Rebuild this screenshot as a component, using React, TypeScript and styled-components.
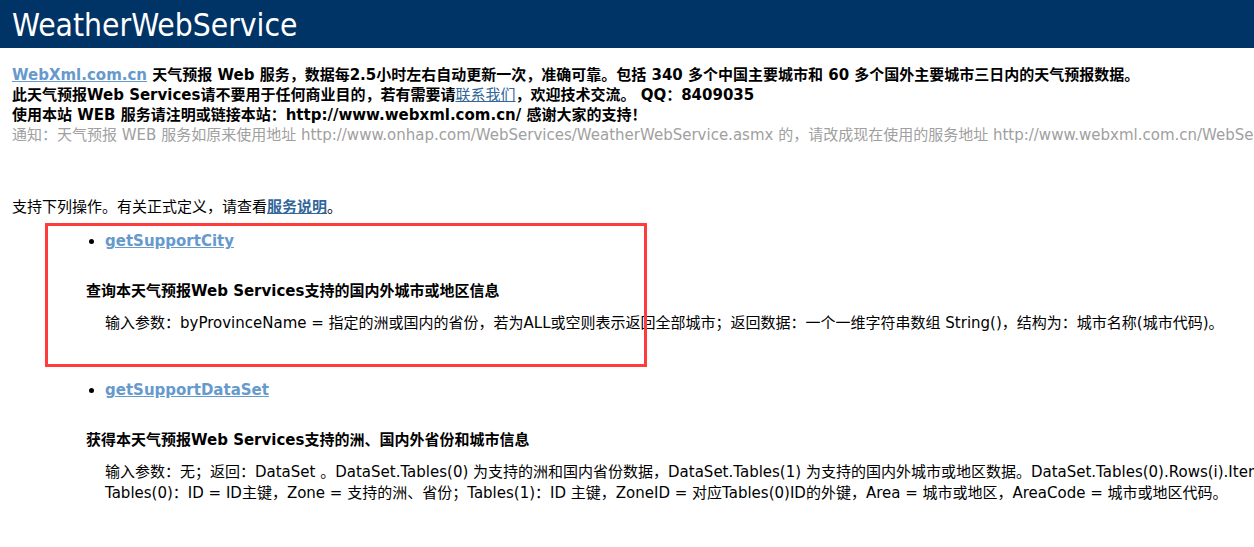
import React from 'react';
import styled, {createGlobalStyle} from 'styled-components';

const GlobalStyle = createGlobalStyle`
    html, body {
        margin: 0;
        padding: 0;
        background: #ffffff;
    }
    body {
        font-family: "DejaVu Sans", "Noto Sans CJK SC", sans-serif;
        color: #000;
        overflow: hidden;
    }
`;

const operations = [
    {
        name: 'getSupportCity',
        title: '查询本天气预报Web Services支持的国内外城市或地区信息',
        lines: [
            '输入参数：byProvinceName = 指定的洲或国内的省份，若为ALL或空则表示返回全部城市；返回数据：一个一维字符串数组 String()，结构为：城市名称(城市代码)。',
        ],
    },
    {
        name: 'getSupportDataSet',
        title: '获得本天气预报Web Services支持的洲、国内外省份和城市信息',
        lines: [
            '输入参数：无；返回：DataSet 。DataSet.Tables(0) 为支持的洲和国内省份数据，DataSet.Tables(1) 为支持的国内外城市或地区数据。DataSet.Tables(0).Rows(i).Item("ID") 主键对应 DataSet.Tables(1).Rows(i).Item("ZoneID") 外键。',
            'Tables(0)：ID = ID主键，Zone = 支持的洲、省份；Tables(1)：ID 主键，ZoneID = 对应Tables(0)ID的外键，Area = 城市或地区，AreaCode = 城市或地区代码。',
        ],
    },
];

const App = () => {
    return (
        <Page>
            <GlobalStyle />
            <Heading>WeatherWebService</Heading>
            <Intro>
                <Line bold>
                    <Link light href="#">WebXml.com.cn</Link> 天气预报 Web 服务，数据每2.5小时左右自动更新一次，准确可靠。包括 340 多个中国主要城市和 60 多个国外主要城市三日内的天气预报数据。
                </Line>
                <Line bold>
                    此天气预报Web Services请不要用于任何商业目的，若有需要请<Link href="#" plain>联系我们</Link>，欢迎技术交流。 QQ：8409035
                </Line>
                <Line bold>使用本站 WEB 服务请注明或链接本站：http://www.webxml.com.cn/ 感谢大家的支持！</Line>
                <Line muted>
                    通知：天气预报 WEB 服务如原来使用地址 http://www.onhap.com/WebServices/WeatherWebService.asmx 的，请改成现在使用的服务地址 http://www.webxml.com.cn/WebServices/WeatherWebService.asmx
                </Line>
            </Intro>
            <Lead>
                支持下列操作。有关正式定义，请查看<Link href="#">服务说明</Link>。
            </Lead>
            <OpList>
                {operations.map(op => (
                    <OpItem key={op.name}>
                        <Link light href="#">{op.name}</Link>
                        <OpTitle>{op.title}</OpTitle>
                        <OpDesc>
                            {op.lines.map((l, i) => (
                                <DescLine key={i}>{l}</DescLine>
                            ))}
                        </OpDesc>
                    </OpItem>
                ))}
            </OpList>
            <Highlight />
        </Page>
    );
};

const Page = styled.div`
    position: relative;
    width: 1254px;
    min-height: 547px;
    font-size: 15px;
    overflow: hidden;
`;

const Heading = styled.h1`
    margin: 0;
    height: 48px;
    box-sizing: border-box;
    padding: 6px 0 0 12px;
    background-color: #003366;
    color: #ffffff;
    font-family: "DejaVu Sans Condensed", "DejaVu Sans", sans-serif;
    font-weight: normal;
    font-size: 31.5px;
    line-height: 38px;
`;

const Intro = styled.div`
    margin: 17px 0 0 12px;
    line-height: 20px;
`;

const Line = styled.div<{bold?: boolean; muted?: boolean}>`
    white-space: nowrap;
    font-weight: ${p => (p.bold ? 'bold' : 'normal')};
    color: ${p => (p.muted ? '#a0a0a0' : '#000')};
`;

const Link = styled.a<{light?: boolean; plain?: boolean}>`
    color: ${p => (p.light ? '#6699cc' : '#336699')};
    font-weight: ${p => (p.plain ? 'normal' : 'bold')};
    text-decoration: underline;
`;

const Lead = styled.p`
    margin: 52px 0 0 12px;
    line-height: 20px;
`;

const OpList = styled.ul`
    margin: 14px 0 0 0;
    padding: 0 0 0 105px;
    list-style: disc;
`;

const OpItem = styled.li`
    margin-bottom: 46px;
    line-height: 20px;
`;

const OpTitle = styled.h3`
    margin: 30px 0 0 -19px;
    font-size: 15px;
    line-height: 20px;
    font-weight: bold;
`;

const OpDesc = styled.div`
    margin-top: 12px;
    line-height: 21px;
`;

const DescLine = styled.div`
    white-space: nowrap;
`;

const Highlight = styled.div`
    position: absolute;
    left: 45px;
    top: 223px;
    width: 602px;
    height: 144px;
    box-sizing: border-box;
    border: 3px solid #ff3b3b;
    pointer-events: none;
`;

export default App;
